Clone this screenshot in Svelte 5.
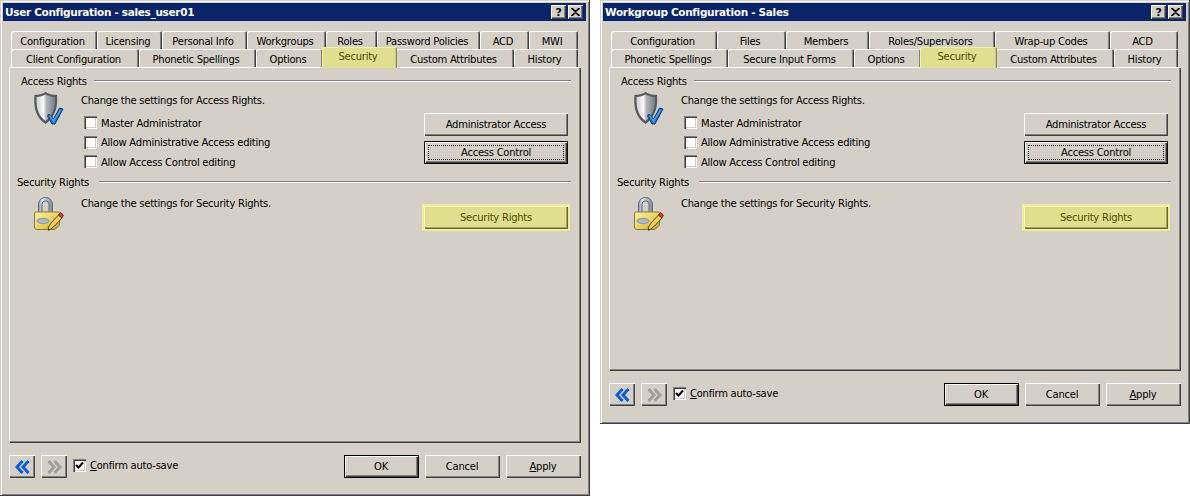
<script>
  const dialogs = [
    {
      title: 'User Configuration - sales_user01',
      height: 496,
      row1: [['Configuration', 86], ['Licensing', 65], ['Personal Info', 85], ['Workgroups', 79], ['Roles', 51], ['Password Policies', 103], ['ACD', 49], ['MWI', 49]],
      row2: [['Client Configuration', 128], ['Phonetic Spellings', 117], ['Options', 67], ['Security', 75, true], ['Custom Attributes', 118], ['History', 64]],
    },
    {
      title: 'Workgroup Configuration - Sales',
      height: 424,
      row1: [['Configuration', 106], ['Files', 69], ['Members', 83], ['Roles/Supervisors', 126], ['Wrap-up Codes', 115], ['ACD', 68]],
      row2: [['Phonetic Spellings', 117], ['Secure Input Forms', 126], ['Options', 67], ['Security', 77, true], ['Custom Attributes', 118], ['History', 64]],
    },
  ]
  const accessOptions = ['Master Administrator', 'Allow Administrative Access editing', 'Allow Access Control editing']
</script>

{#snippet tabRow(tabs)}
  <div class="tab-row">
    {#each tabs as [label, width, active]}
      <div class="tab" class:active style="width: {width}px"><span>{label}</span></div>
    {/each}
  </div>
{/snippet}

<div class="desktop">
  {#each dialogs as d}
    <div class="dialog" style="height: {d.height}px">
      <div class="titlebar">
        <span class="title">{d.title}</span>
        <div class="caption-btn help">?</div>
        <div class="caption-btn close">
          <svg width="9" height="8" viewBox="0 0 9 8"><path d="M0.5 0 4.5 3.5 8.5 0M0.5 8 4.5 4.5 8.5 8" fill="none" stroke="#000" stroke-width="1.6"/></svg>
        </div>
      </div>

      <div class="tabs">
        {@render tabRow(d.row1)}
        {@render tabRow(d.row2)}
      </div>

      <div class="panel">
        <div class="heading access"><span>Access Rights</span><i></i></div>
        <div class="section access-body">
          <svg class="icon" width="32" height="34" viewBox="0 0 32 34">
            <defs>
              <linearGradient id="sh" x1="0" x2="1" y1="0" y2="0">
                <stop offset="0" stop-color="#c8cacc" />
                <stop offset="0.38" stop-color="#fdfdfd" />
                <stop offset="0.52" stop-color="#b4b7ba" />
                <stop offset="1" stop-color="#767b80" />
              </linearGradient>
            </defs>
            <path d="M11.500 0C9 2 4 3 0.500 3 -0.500 14 1 25 11.500 32 22 25 24 14 23 3 19 3 14 2 11.500 0Z" fill="#565b60" />
            <path d="M11.500 2.500C9 4 5.500 5 2.500 5 2 14 3.500 23 11.500 29 19.500 23 21.500 14 21 5 17.500 5 14 4 11.500 2.500Z" fill="url(#sh)" />
            <path d="M15 22 19.500 27 25.500 16 29 17 21 32H18L13.500 24Z" fill="#1f6fc4" stroke="#0e3f7c" stroke-width="1" />
            <path d="M15.500 23.500 19.500 29.500 26.500 18" fill="none" stroke="#55aaee" stroke-width="1.200" />
          </svg>
          <div class="left-col">
            <p class="desc">Change the settings for Access Rights.</p>
            {#each accessOptions as opt}
              <div class="check-row"><span class="check"></span><span class="opt">{opt}</span></div>
            {/each}
          </div>
          <div class="right-col">
            <button class="btn wide">Administrator Access</button>
            <button class="btn wide default focus"><span>Access Control</span></button>
          </div>
        </div>

        <div class="heading security"><span>Security Rights</span><i></i></div>
        <div class="section">
          <svg class="icon lock" width="30" height="34" viewBox="0 0 30 34">
            <defs>
              <linearGradient id="lk" x1="0" x2="1" y1="0" y2="1">
                <stop offset="0" stop-color="#fbf2a6" />
                <stop offset="0.6" stop-color="#e6cd5e" />
                <stop offset="1" stop-color="#b9953a" />
              </linearGradient>
              <linearGradient id="sk" x1="0" x2="1" y1="0" y2="0">
                <stop offset="0" stop-color="#8b98a8" />
                <stop offset="0.3" stop-color="#dde3ea" />
                <stop offset="1" stop-color="#7d8896" />
              </linearGradient>
            </defs>
            <path d="M4.500 16V8C4.500 3 7.500 0.500 11.500 0.500 15.500 0.500 18.500 3 18.500 8V16H15V8C15 5 13.500 4 11.500 4 9.500 4 8 5 8 8V16Z" fill="url(#sk)" stroke="#5f6b7c" stroke-width="1" />
            <path d="M1 15H24C25 15 25.500 15.500 25.500 16.500V28L21 32.500H3C1.500 32.500 0.500 31.500 0.500 30V15.500Z" fill="url(#lk)" stroke="#8d7a35" stroke-width="1" />
            <ellipse cx="9" cy="24" rx="6" ry="2.700" fill="#aeb8c2" stroke="#7c8793" stroke-width=".8" />
            <path d="M14 31 17 26 24.500 18 28 21 20.500 29 15.500 33Z" fill="#f3cf4e" stroke="#5a4a20" stroke-width="1" />
            <path d="M24.500 18 26.500 15.500 29.500 18 28 21Z" fill="#d8342c" stroke="#7d1e1a" stroke-width=".8" />
            <path d="M14.500 31 16 33 14 33.500Z" fill="#222" />
          </svg>
          <div class="left-col second">
            <p class="desc">Change the settings for Security Rights.</p>
          </div>
          <div class="right-col second">
            <button class="btn wide hilite">Security Rights</button>
          </div>
        </div>
      </div>

      <div class="footer">
        <button class="btn nav" aria-label="Back">
          <svg width="15" height="14" viewBox="0 0 15 14"><path d="M7.500 1 2 7 7.500 13M13.500 1 8 7 13.500 13" fill="none" stroke="#0a5fd8" stroke-width="3" /></svg>
        </button>
        <button class="btn nav next" aria-label="Forward">
          <svg width="15" height="14" viewBox="0 0 15 14"><path d="M1.500 1 7 7 1.500 13M7.500 1 13 7 7.500 13" fill="none" stroke="#a0a0a0" stroke-width="3" /></svg>
        </button>
        <span class="check checked">
          <svg width="9" height="9" viewBox="0 0 9 9"><path d="M1 4 3.500 6.500 8 1.500" fill="none" stroke="#000" stroke-width="2" /></svg>
        </span>
        <span class="autosave"><u>C</u>onfirm auto-save</span>
        <button class="btn act default ok">OK</button>
        <button class="btn act">Cancel</button>
        <button class="btn act"><u>A</u>pply</button>
      </div>
    </div>
  {/each}
</div>

<style>
  :global(body) {
    background: #fff;
  }

  .desktop {
    display: flex;
    gap: 10px;
    align-items: flex-start;
    width: 1190px;
    font-family: "DejaVu Sans", sans-serif;
    font-size: 10px;
    letter-spacing: -0.25px;
    color: #000;
  }

  .dialog {
    box-sizing: border-box;
    width: 590px;
    padding: 3px 3px 2px;
    display: flex;
    flex-direction: column;
    background: #d4d0c8;
    border-right: 1px solid #404040;
    border-bottom: 1px solid #404040;
    box-shadow: inset 1px 1px 0 #d4d0c8, inset 2px 2px 0 #fff, inset -1px -1px 0 #808080;
  }

  .titlebar {
    height: 18px;
    flex: none;
    display: flex;
    align-items: center;
    gap: 2px;
    padding: 0 3px 0 2px;
    background: #0a246a;
  }
  .title {
    flex: 1;
    color: #fff;
    font-weight: bold;
    font-size: 10.500px;
    letter-spacing: -0.32px;
  }
  .caption-btn {
    box-sizing: border-box;
    width: 15px;
    height: 14px;
    display: flex;
    align-items: center;
    justify-content: center;
    background: #d4d0c8;
    font-weight: bold;
    font-size: 11px;
    box-shadow: inset 1px 1px 0 #fff, inset -1px -1px 0 #404040, inset -2px -2px 0 #808080;
  }

  .tabs {
    flex: none;
    padding: 10px 0 0 8px;
  }
  .tab-row {
    display: flex;
    height: 18px;
  }
  .tab {
    box-sizing: border-box;
    height: 18px;
    padding: 2px 3px 0 0;
    display: flex;
    align-items: center;
    justify-content: center;
    white-space: nowrap;
    border-radius: 2px 2px 0 0;
    background: #d4d0c8;
    box-shadow: inset 1px 1px 0 #fff, inset -1px 0 0 #404040, inset -2px 0 0 #808080;
  }
  .tab.active {
    position: relative;
    z-index: 2;
    height: 21px;
    margin: -2px -1px -1px -1px;
    padding: 0 3px 0 0;
    background: #dfe08f;
    color: #4c4c00;
    box-shadow: inset 1px 1px 0 #f2f2a8, inset -1px 0 0 #8a8a40, inset -2px 0 0 #c4c47a;
  }
  .tab.active span {
    margin-top: -3px;
  }

  .panel {
    flex: 1;
    min-height: 0;
    box-sizing: border-box;
    margin: 0 5px 0 6px;
    padding-top: 7px;
    background: #d4d0c8;
    box-shadow: inset 1px 1px 0 #fff, inset -1px -1px 0 #404040, inset -2px -2px 0 #808080;
  }

  .heading {
    display: flex;
    align-items: center;
    height: 14px;
    margin-right: 10px;
  }
  .heading i {
    flex: 1;
    height: 1px;
    background: #808080;
    border-bottom: 1px solid #fff;
  }
  .heading.access {
    padding-left: 12px;
  }
  .heading.access i {
    margin-left: 7px;
  }
  .heading.security {
    padding-left: 8px;
  }
  .heading.security i {
    margin-left: 10px;
  }

  .section {
    display: flex;
    align-items: flex-start;
    padding-right: 13px;
  }
  .access-body {
    height: 87px;
  }
  .icon {
    flex: none;
    margin: 4px 0 0 25px;
    width: 32px;
  }
  .icon.lock {
    margin: 8px 2px 0 25px;
    width: 30px;
  }
  .left-col {
    flex: 1;
    padding: 6px 0 0 15px;
  }
  .left-col.second {
    padding-top: 8px;
  }
  .desc {
    margin: 0 0 8px;
    line-height: 14px;
  }
  .check-row {
    display: flex;
    align-items: center;
    gap: 4px;
    height: 13px;
    margin: 0 0 6.500px 3px;
    white-space: nowrap;
  }
  .opt {
    padding-top: 1px;
  }
  .check {
    box-sizing: border-box;
    flex: none;
    width: 13px;
    height: 13px;
    background: #fff;
    box-shadow: inset 1px 1px 0 #808080, inset 2px 2px 0 #404040, inset -1px -1px 0 #fff, inset -2px -2px 0 #d4d0c8;
    display: inline-flex;
    align-items: center;
    justify-content: center;
  }

  .right-col {
    flex: none;
    display: flex;
    flex-direction: column;
    gap: 5px;
    padding-top: 25px;
  }
  .right-col.second {
    padding-top: 17px;
  }

  .btn {
    box-sizing: border-box;
    height: 23px;
    padding: 0;
    border: none;
    background: #d4d0c8;
    font: inherit;
    letter-spacing: inherit;
    color: #000;
    box-shadow: inset 1px 1px 0 #fff, inset -1px -1px 0 #404040, inset -2px -2px 0 #808080;
  }
  .btn.wide {
    width: 144px;
  }
  .btn.default {
    box-shadow: inset 0 0 0 1px #000, inset 2px 2px 0 #fff, inset -2px -2px 0 #404040, inset -3px -3px 0 #808080;
  }
  .btn.focus {
    position: relative;
  }
  .btn.focus span::before {
    content: "";
    position: absolute;
    inset: 4px;
    border: 1px dotted #000;
  }
  .btn.hilite {
    background: #dfe08f;
    color: #4c4c00;
    box-shadow: 0 0 0 2px #eded9c, inset 1px 1px 0 #f6f6b8, inset -1px -1px 0 #6a6a30, inset -2px -2px 0 #a4a45c;
  }

  .footer {
    flex: none;
    display: flex;
    align-items: flex-start;
    height: 50px;
    padding: 12px 5px 0 6px;
    box-sizing: border-box;
  }
  .btn.nav {
    width: 26px;
    margin-right: 6px;
    display: flex;
    align-items: center;
    justify-content: center;
  }
  .footer .check {
    margin: 4px 4px 0 0;
  }
  .autosave {
    flex: 1;
    margin-top: 4px;
    line-height: 14px;
  }
  .btn.act {
    width: 75px;
    margin-left: 6px;
    padding-right: 1px;
  }
  .btn.ok {
    margin-left: 0;
  }
</style>
